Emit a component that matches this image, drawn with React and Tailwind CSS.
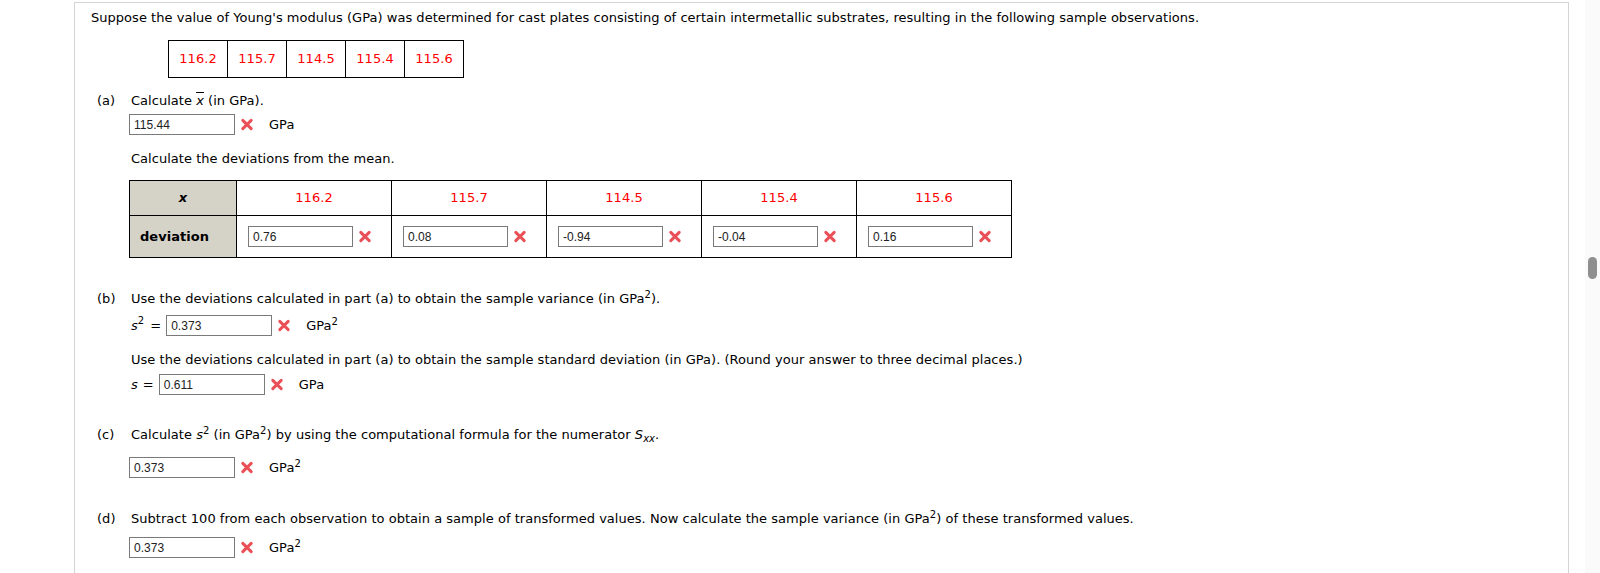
import React from "react";

const observations = ["116.2", "115.7", "114.5", "115.4", "115.6"];
const deviations = ["0.76", "0.08", "-0.94", "-0.04", "0.16"];

const XMark = () => (
  <svg width="14" height="13" viewBox="0 0 14 13" className="shrink-0">
    <path
      d="M2.8 2.4L11.2 10.6M11.2 2.4L2.8 10.6"
      stroke="#ea5058"
      strokeWidth="3"
      strokeLinecap="round"
    />
  </svg>
);

const Answer = ({ value, narrow }) => (
  <div
    className={`${narrow ? "w-[105px]" : "w-[106px]"} h-[21px] shrink-0 border border-[#7a7a7a] pl-[4px] flex items-center font-['Liberation_Sans',Arial,sans-serif] text-[12px] text-[#222]`}
  >
    {value}
  </div>
);

const Wrong = ({ children }) => (
  <div className="flex items-center">
    <div className="ml-[5px]">
      <XMark />
    </div>
    <span className="ml-[15px]">{children}</span>
  </div>
);

const GPa2 = () => (
  <>
    GPa<sup className="text-[10px]">2</sup>
  </>
);

const Part = ({ label, children }) => (
  <div className="flex h-[16px] items-center leading-[16px]">
    <span className="w-[40px] shrink-0 pl-[6px]">{label}</span>
    <span>{children}</span>
  </div>
);

const App = () => {
  return (
    <div className="flex h-[573px] bg-white overflow-hidden">
      <div className="w-[74px] shrink-0" />

      {/* question panel */}
      <div className="mt-[2px] w-[1495px] shrink-0 border-l border-t border-r border-[#d4d4d4] pl-[16px] pt-[7px] font-['DejaVu_Sans',Verdana,sans-serif] text-[13px] tracking-[0.03px] text-black">
        <p className="leading-[16px]">
          Suppose the value of Young's modulus (GPa) was determined for cast plates consisting of certain intermetallic substrates, resulting in the following sample observations.
        </p>

        <div className="mt-[14px] ml-[77px] flex w-fit border-l border-t border-black">
          {observations.map((v) => (
            <div
              key={v}
              className="w-[59px] h-[37px] border-r border-b border-black flex items-center justify-center text-[#ff0000]"
            >
              {v}
            </div>
          ))}
        </div>

        {/* (a) */}
        <div className="mt-[15px]">
          <Part label="(a)">
            Calculate <span className="italic overline">x</span> (in GPa).
          </Part>
        </div>
        <div className="mt-[5px] ml-[38px] flex items-center">
          <Answer value="115.44" />
          <Wrong>GPa</Wrong>
        </div>

        <p className="mt-[16px] ml-[40px] leading-[16px]">Calculate the deviations from the mean.</p>

        <div className="mt-[13px] ml-[38px] flex flex-col w-fit border-l border-t border-black">
          <div className="flex h-[35px]">
            <div className="w-[107px] border-r border-b border-black bg-[#d5d2c8] flex items-center justify-center font-bold italic">
              x
            </div>
            {observations.map((v) => (
              <div
                key={v}
                className="w-[155px] border-r border-b border-black flex items-center justify-center text-[#ff0000]"
              >
                {v}
              </div>
            ))}
          </div>
          <div className="flex h-[42px]">
            <div className="w-[107px] border-r border-b border-black bg-[#d5d2c8] flex items-center pl-[10px] font-bold">
              deviation
            </div>
            {deviations.map((d) => (
              <div
                key={d}
                className="w-[155px] border-r border-b border-black flex items-center pl-[11px]"
              >
                <Answer value={d} narrow />
                <div className="ml-[5px]">
                  <XMark />
                </div>
              </div>
            ))}
          </div>
        </div>

        {/* (b) */}
        <div className="mt-[33px]">
          <Part label="(b)">
            Use the deviations calculated in part (a) to obtain the sample variance (in <GPa2 />).
          </Part>
        </div>
        <div className="mt-[8px] ml-[40px] flex items-center">
          <span className="italic">s</span>
          <sup className="text-[10px]">2</sup>
          <span className="ml-[6px] mr-[5px]">=</span>
          <Answer value="0.373" />
          <Wrong>
            <GPa2 />
          </Wrong>
        </div>

        <p className="mt-[16px] ml-[40px] leading-[16px]">
          Use the deviations calculated in part (a) to obtain the sample standard deviation (in GPa). (Round your answer to three decimal places.)
        </p>
        <div className="mt-[6px] ml-[40px] flex items-center">
          <span className="italic">s</span>
          <span className="ml-[5px] mr-[5px]">=</span>
          <Answer value="0.611" />
          <Wrong>GPa</Wrong>
        </div>

        {/* (c) */}
        <div className="mt-[32px]">
          <Part label="(c)">
            Calculate <span className="italic">s</span>
            <sup className="text-[10px]">2</sup> (in <GPa2 />) by using the computational formula for the numerator{" "}
            <span className="italic">S</span>
            <sub className="italic text-[10px]">xx</sub>.
          </Part>
        </div>
        <div className="mt-[14px] ml-[38px] flex items-center">
          <Answer value="0.373" />
          <Wrong>
            <GPa2 />
          </Wrong>
        </div>

        {/* (d) */}
        <div className="mt-[33px]">
          <Part label="(d)">
            Subtract 100 from each observation to obtain a sample of transformed values. Now calculate the sample variance (in <GPa2 />) of these transformed values.
          </Part>
        </div>
        <div className="mt-[10px] ml-[38px] flex items-center">
          <Answer value="0.373" />
          <Wrong>
            <GPa2 />
          </Wrong>
        </div>
      </div>

      {/* scrollbar */}
      <div className="ml-[16px] w-[15px] shrink-0 bg-[#fafafa] pt-[257px] pl-[3px]">
        <div className="w-[9px] h-[22px] rounded-full bg-[#8f8f8f]" />
      </div>
    </div>
  );
};

export default App;
